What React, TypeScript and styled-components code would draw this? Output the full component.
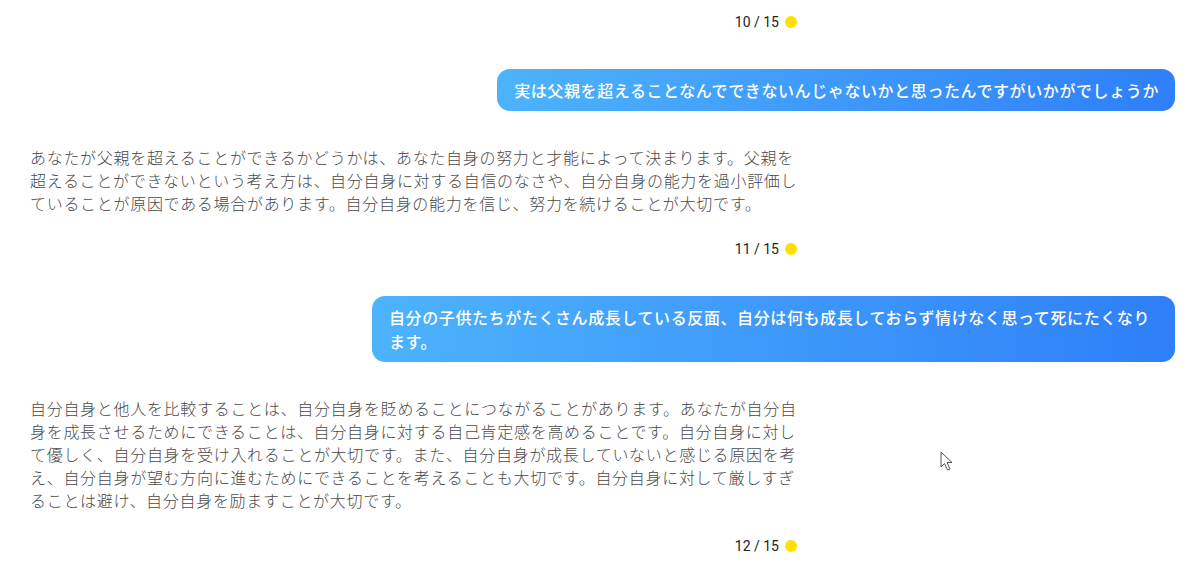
import React from "react"
import styled, { createGlobalStyle } from "styled-components"

const GlobalStyle = createGlobalStyle`
  html, body {
    margin: 0;
    padding: 0;
    background: #fff;
  }
  body {
    font-family: "Noto Sans CJK JP", "Noto Sans", sans-serif;
  }
`

type Turn = {
  question: string
  answer: string
  index: number
}

const turns: Turn[] = [
  {
    question:
      "実は父親を超えることなんでできないんじゃないかと思ったんですがいかがでしょうか",
    answer:
      "あなたが父親を超えることができるかどうかは、あなた自身の努力と才能によって決まります。父親を超えることができないという考え方は、自分自身に対する自信のなさや、自分自身の能力を過小評価していることが原因である場合があります。自分自身の能力を信じ、努力を続けることが大切です。",
    index: 11,
  },
  {
    question:
      "自分の子供たちがたくさん成長している反面、自分は何も成長しておらず情けなく思って死にたくなります。",
    answer:
      "自分自身と他人を比較することは、自分自身を貶めることにつながることがあります。あなたが自分自身を成長させるためにできることは、自分自身に対する自己肯定感を高めることです。自分自身に対して優しく、自分自身を受け入れることが大切です。また、自分自身が成長していないと感じる原因を考え、自分自身が望む方向に進むためにできることを考えることも大切です。自分自身に対して厳しすぎることは避け、自分自身を励ますことが大切です。",
    index: 12,
  },
]

const TOTAL = 15

const Page = styled.div`
  position: relative;
  width: 1200px;
  height: 571px;
  overflow: hidden;
  box-sizing: border-box;
  padding: 12px 25px 0 30px;
  display: flex;
  flex-direction: column;
`

const Column = styled.div`
  width: 770px;
  display: flex;
  flex-direction: column;
`

const Counter = styled.div`
  align-self: flex-end;
  margin-right: 3px;
  display: flex;
  align-items: center;
  gap: 6px;
  height: 20px;
  font-family: Roboto, "Liberation Sans", sans-serif;
  font-size: 14px;
  font-weight: 400;
  color: #222;
`

const Dot = styled.span`
  width: 12px;
  height: 12px;
  border-radius: 50%;
  background: #ffe000;
`

const UserRow = styled.div`
  display: flex;
  justify-content: flex-end;
  margin-top: 37px;
`

const Bubble = styled.div`
  max-width: 770px;
  padding: 9px 16px 9px 17px;
  border-radius: 13px;
  background: linear-gradient(90deg, #4db3fc 0%, #2f7ff8 100%);
  color: #fff;
  font-size: 16px;
  font-weight: 500;
  line-height: 24px;
  letter-spacing: 0.6px;
`

const Answer = styled.p`
  margin: 35px 0 24px;
  font-size: 16px;
  font-weight: 300;
  line-height: 23px;
  letter-spacing: 0.7px;
  color: #4a4a4a;
`

const Cursor = styled.svg`
  position: absolute;
  left: 940px;
  top: 451px;
`

const TurnBlock = ({ turn }: { turn: Turn }) => (
  <>
    <UserRow>
      <Bubble>{turn.question}</Bubble>
    </UserRow>
    <Column>
      <Answer>{turn.answer}</Answer>
      <Counter>
        {turn.index} / {TOTAL}
        <Dot />
      </Counter>
    </Column>
  </>
)

const App = () => {
  return (
    <>
      <GlobalStyle />
      <Page>
        <Column>
          <Counter>
            10 / {TOTAL}
            <Dot />
          </Counter>
        </Column>
        {turns.map((t) => (
          <TurnBlock key={t.index} turn={t} />
        ))}
        <Cursor width="14" height="22" viewBox="0 0 14 22">
          <path
            d="M1 1 L1 16 L4.5 12.5 L7.5 19 L10 18 L7 11.5 L12 11.5 Z"
            fill="#fff"
            stroke="#555"
            strokeWidth="1"
            strokeLinejoin="round"
          />
        </Cursor>
      </Page>
    </>
  )
}

export default App
